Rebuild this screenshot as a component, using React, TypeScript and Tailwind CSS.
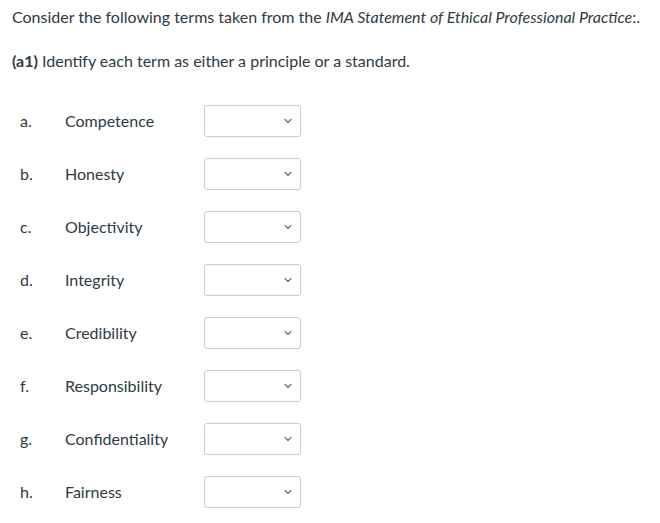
import { ChevronDown } from 'lucide-react';

const terms = [
  ['a.', 'Competence'],
  ['b.', 'Honesty'],
  ['c.', 'Objectivity'],
  ['d.', 'Integrity'],
  ['e.', 'Credibility'],
  ['f.', 'Responsibility'],
  ['g.', 'Confidentiality'],
  ['h.', 'Fairness'],
];

export default function App() {
  return (
    <div className="w-[660px] h-[523px] bg-white text-[#2d3b45] font-['Lato',sans-serif] text-[16px] px-3 pt-[7px]">
      <p className="leading-5">
        Consider the following terms taken from the <i>IMA Statement of Ethical Professional Practice</i>:.
      </p>
      <p className="leading-5 mt-6">
        <b>(a1)</b> Identify each term as either a principle or a standard.
      </p>
      <div className="mt-[34px] flex flex-col gap-[21px]">
        {terms.map(([letter, term]) => (
          <div key={letter} className="flex items-center h-8">
            <span className="w-[53px] pl-2">{letter}</span>
            <span className="w-[139px]">{term}</span>
            <div className="w-[97px] h-8 border border-[#c7cdd1] rounded-[3px] flex items-center justify-end pr-1.5">
              <ChevronDown className="w-3 h-3 text-[#6b7780]" strokeWidth={2.5} />
            </div>
          </div>
        ))}
      </div>
    </div>
  );
}
